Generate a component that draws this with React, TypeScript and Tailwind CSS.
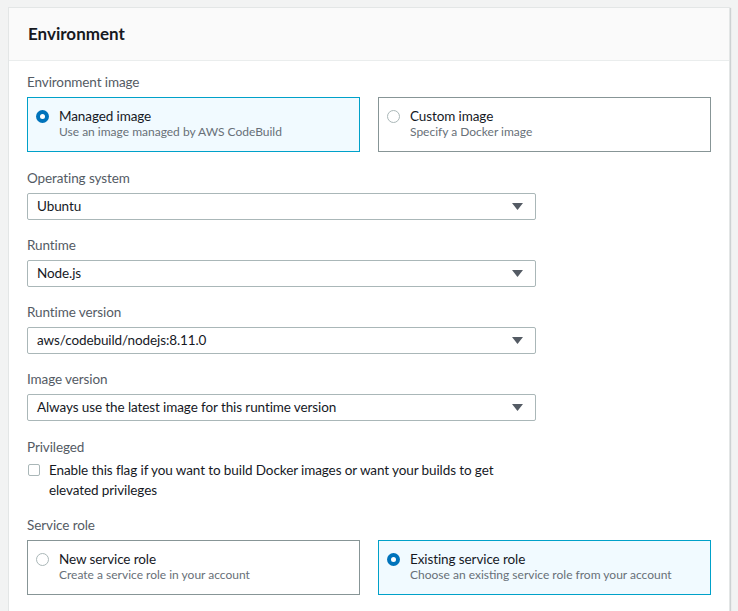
import React from "react";

type TTile = { title: string; desc: string; selected?: boolean };

const Radio = ({ selected }: { selected?: boolean }) =>
  selected ? (
    <span className="mt-[3px] flex h-[13px] w-[13px] shrink-0 items-center justify-center rounded-full bg-[#0073bb]">
      <span className="h-[5px] w-[5px] rounded-full bg-white" />
    </span>
  ) : (
    <span className="mt-[3px] h-[13px] w-[13px] shrink-0 rounded-full border border-[#aab7b8] bg-white" />
  );

const Tile = ({ title, desc, selected }: TTile) => (
  <div
    className={`flex h-[55px] gap-[10px] border pl-[8px] pt-[9px] ${
      selected ? "border-[#00a1c9] bg-[#f1faff]" : "border-[#879596] bg-white"
    }`}
  >
    <Radio selected={selected} />
    <div className="flex flex-col">
      <span className="text-[13.5px] leading-[18px] tracking-[-0.1px] text-[#16191f]">
        {title}
      </span>
      <span className="text-[12px] leading-[14px] text-[#687078]">{desc}</span>
    </div>
  </div>
);

const Label = ({ children }: { children: React.ReactNode }) => (
  <div className="text-[13.5px] leading-5 tracking-[-0.1px] text-[#545b64]">{children}</div>
);

const Select = ({ value }: { value: string }) => (
  <div className="mt-[5px] flex h-[27px] w-[509px] items-center justify-between rounded-[2px] border border-[#aab7b8] bg-white pl-[9px] pr-[12px]">
    <span className="text-[13.5px] tracking-[-0.1px] text-[#16191f]">{value}</span>
    <svg width="11" height="7" viewBox="0 0 11 7">
      <path d="M0 0h11L5.5 7z" fill="#545b64" />
    </svg>
  </div>
);

const selects = [
  { label: "Operating system", value: "Ubuntu" },
  { label: "Runtime", value: "Node.js" },
  { label: "Runtime version", value: "aws/codebuild/nodejs:8.11.0" },
  { label: "Image version", value: "Always use the latest image for this runtime version" },
];

export default function App() {
  return (
    <div
      className="min-h-screen bg-[#f2f3f3] pl-2 pt-[7px]"
      style={{ fontFamily: "Lato, 'Liberation Sans', sans-serif" }}
    >
      <div className="w-[722px] border border-[#e3e6e6] bg-white shadow-[1px_1px_1px_rgba(0,28,36,0.15)]">
        <div className="flex h-[53px] items-center border-b border-[#eaeded] bg-[#fafafa] px-[19px]">
          <h2 className="text-[17px] font-bold text-[#16191f]">Environment</h2>
        </div>
        <div className="flex flex-col gap-4 px-[18px] pb-6 pt-[11px]">
          <div>
            <Label>Environment image</Label>
            <div className="mt-[5px] grid grid-cols-2 gap-[18px]">
              <Tile title="Managed image" desc="Use an image managed by AWS CodeBuild" selected />
              <Tile title="Custom image" desc="Specify a Docker image" />
            </div>
          </div>
          <div className="flex flex-col gap-[15px]">
            {selects.map((s) => (
              <div key={s.label}>
                <Label>{s.label}</Label>
                <Select value={s.value} />
              </div>
            ))}
          </div>
          <div>
            <Label>Privileged</Label>
            <div className="mt-[3px] flex w-[509px] gap-[9px] pl-[1px]">
              <span className="mt-[4px] h-[12px] w-[12px] shrink-0 rounded-[2px] border border-[#aab7b8] bg-white" />
              <span className="text-[13.5px] leading-5 tracking-[-0.1px] text-[#16191f]">
                Enable this flag if you want to build Docker images or want your builds to get
                elevated privileges
              </span>
            </div>
          </div>
          <div className="-mt-px">
            <Label>Service role</Label>
            <div className="mt-[5px] grid grid-cols-2 gap-[18px]">
              <Tile title="New service role" desc="Create a service role in your account" />
              <Tile
                title="Existing service role"
                desc="Choose an existing service role from your account"
                selected
              />
            </div>
          </div>
        </div>
      </div>
    </div>
  );
}
